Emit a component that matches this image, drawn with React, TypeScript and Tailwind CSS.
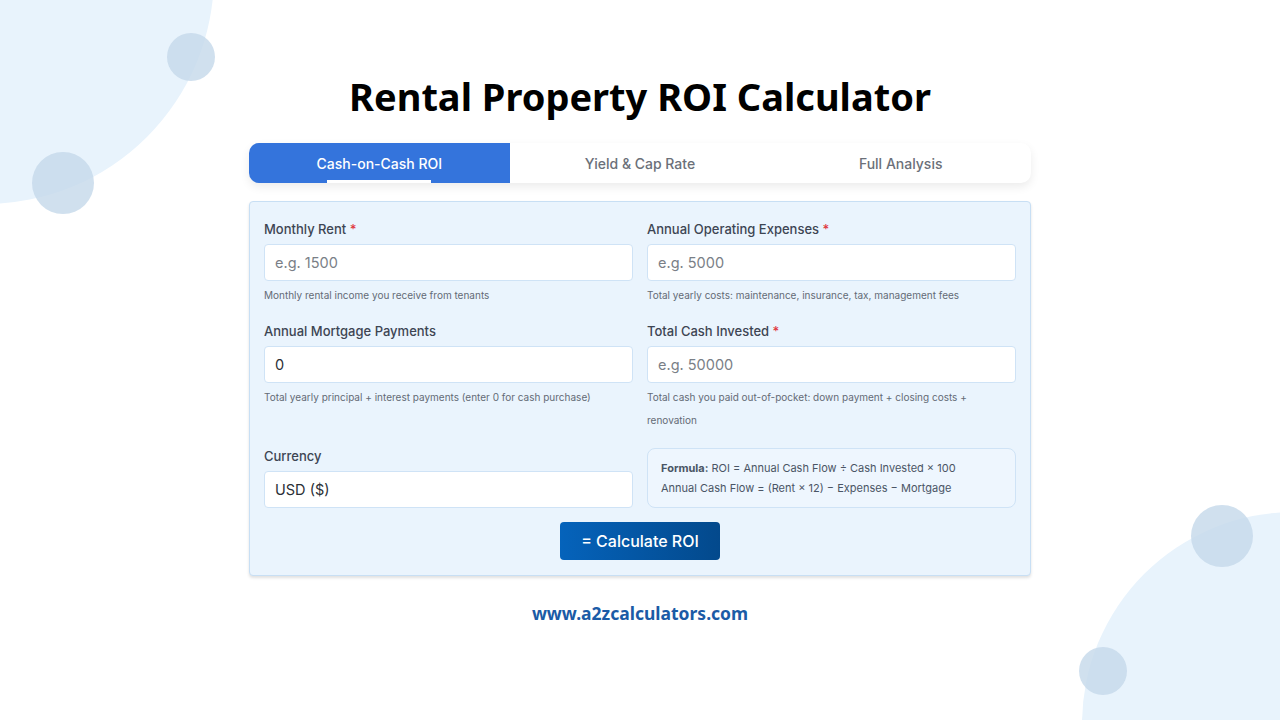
import React from "react";

const Field = ({
  label,
  required,
  value,
  placeholder,
  help,
}: {
  label: string;
  required?: boolean;
  value?: string;
  placeholder?: string;
  help?: string;
}) => (
  <div className="flex flex-col">
    <div className="text-[13px] leading-[16px] font-medium text-[#3d4553]">
      {label}
      {required && <span className="text-[#e0383e]"> *</span>}
    </div>
    <div className="mt-[7px] h-[37px] bg-white border border-[#cfe3f6] rounded-[4px] flex items-center px-[10px] text-[14.5px]">
      {value ? (
        <span className="text-[#2b2f36]">{value}</span>
      ) : (
        <span className="text-[#7a7f87]">{placeholder}</span>
      )}
    </div>
    {help && (
      <div className="mt-[3px] text-[10px] leading-[23px] text-[#646b76]">{help}</div>
    )}
  </div>
);

export default function App() {
  return (
    <div
      className="relative w-[1280px] h-[720px] overflow-hidden bg-white"
      style={{ fontFamily: "Inter, 'Noto Sans', sans-serif" }}
    >
      {/* decorative circles */}
      <div className="absolute left-[-244px] top-[-254px] w-[458px] h-[458px] rounded-full bg-[#e8f3fc]" />
      <div className="absolute left-[167px] top-[33px] w-[48px] h-[48px] rounded-full bg-[#c4d8ea] opacity-80" />
      <div className="absolute left-[32px] top-[152px] w-[62px] h-[62px] rounded-full bg-[#c4d8ea] opacity-80" />
      <div className="absolute left-[1082px] top-[512px] w-[424px] h-[424px] rounded-full bg-[#e8f3fc]" />
      <div className="absolute left-[1191px] top-[505px] w-[62px] h-[62px] rounded-full bg-[#c4d8ea] opacity-80" />
      <div className="absolute left-[1079px] top-[647px] w-[48px] h-[48px] rounded-full bg-[#c4d8ea] opacity-80" />

      <div className="relative flex flex-col items-center">
        <h1
          className="mt-[70px] text-[38px] leading-[52px] font-bold text-black"
          style={{ fontFamily: "'Noto Sans', sans-serif" }}
        >
          Rental Property ROI Calculator
        </h1>

        {/* tabs */}
        <div className="mt-[21px] w-[782px] h-[40px] flex rounded-[10px] bg-white shadow-[0_4px_10px_rgba(0,0,0,0.08)] overflow-hidden">
          <div className="relative flex-1 bg-[#3474dc] flex items-center justify-center text-white text-[14px] font-medium">
            Cash-on-Cash ROI
            <div className="absolute bottom-0 left-[78px] w-[104px] h-[3px] bg-white" />
          </div>
          <div className="flex-1 flex items-center justify-center text-[#6b7079] text-[14px] font-medium">
            Yield &amp; Cap Rate
          </div>
          <div className="flex-1 flex items-center justify-center text-[#6b7079] text-[14px] font-medium">
            Full Analysis
          </div>
        </div>

        {/* card */}
        <div className="mt-[18px] w-[782px] bg-[#eaf4fd] border border-[#c8dff4] rounded-[4px] shadow-[0_2px_3px_rgba(0,0,0,0.12)] px-[14px] pt-[19px] pb-[15px]">
          <div className="grid grid-cols-2 gap-x-[14px] gap-y-[16px]">
            <Field
              label="Monthly Rent"
              required
              placeholder="e.g. 1500"
              help="Monthly rental income you receive from tenants"
            />
            <Field
              label="Annual Operating Expenses"
              required
              placeholder="e.g. 5000"
              help="Total yearly costs: maintenance, insurance, tax, management fees"
            />
            <Field
              label="Annual Mortgage Payments"
              value="0"
              help="Total yearly principal + interest payments (enter 0 for cash purchase)"
            />
            <Field
              label="Total Cash Invested"
              required
              placeholder="e.g. 50000"
              help="Total cash you paid out-of-pocket: down payment + closing costs + renovation"
            />
            <Field label="Currency" value="USD ($)" />
            <div className="bg-[#eef6fe] border border-[#cfe3f6] rounded-[8px] px-[13px] flex flex-col justify-center text-[11px] leading-[20px] text-[#4a5565]">
              <div>
                <span className="font-bold">Formula:</span> ROI = Annual Cash Flow ÷ Cash Invested × 100
              </div>
              <div>Annual Cash Flow = (Rent × 12) − Expenses − Mortgage</div>
            </div>
          </div>
          <div className="mt-[14px] flex justify-center">
            <div className="w-[160px] h-[38px] rounded-[4px] bg-gradient-to-r from-[#0563bb] to-[#03498c] flex items-center justify-center text-white text-[16px] font-medium">
              = Calculate ROI
            </div>
          </div>
        </div>

        <div
          className="mt-[24px] text-[17.5px] font-bold text-[#1b5ba6]"
          style={{ fontFamily: "'Noto Sans', sans-serif" }}
        >
          www.a2zcalculators.com
        </div>
      </div>
    </div>
  );
}
